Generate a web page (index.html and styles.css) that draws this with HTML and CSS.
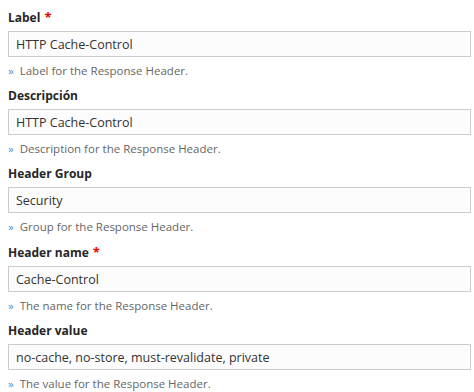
FILE: index.html
```html
<!DOCTYPE html>
<html lang="en">
<head>
    <meta charset="UTF-8">
    <meta name="viewport" content="width=device-width, initial-scale=1.0">
    <title>Response Header</title>
    <link rel="stylesheet" href="styles.css">
</head>
<body>
    <form class="header-form">
        <div class="form-item">
            <label for="label" class="required">Label</label>
            <input type="text" id="label" value="HTTP Cache-Control">
            <div class="description">Label for the Response Header.</div>
        </div>

        <div class="form-item">
            <label for="description">Descripción</label>
            <input type="text" id="description" value="HTTP Cache-Control">
            <div class="description">Description for the Response Header.</div>
        </div>

        <div class="form-item">
            <label for="group">Header Group</label>
            <input type="text" id="group" value="Security">
            <div class="description">Group for the Response Header.</div>
        </div>

        <div class="form-item">
            <label for="name" class="required">Header name</label>
            <input type="text" id="name" value="Cache-Control">
            <div class="description">The name for the Response Header.</div>
        </div>

        <div class="form-item">
            <label for="value">Header value</label>
            <input type="text" id="value" value="no-cache, no-store, must-revalidate, private">
            <div class="description">The value for the Response Header.</div>
        </div>
    </form>
</body>
</html>
```

FILE: styles.css
```css
body {
    font-family: 'Open Sans', 'Liberation Sans', sans-serif;
    background-color: #fff;
    color: #333;
    margin: 0;
    padding: 8px 3px 0 8px;
}
.form-item {
    margin-bottom: 8.5px;
}
label {
    display: block;
    font-weight: 700;
    font-size: 12px;
    line-height: 18px;
    color: #262626;
    margin-bottom: 4px;
}
.required:after {
    content: "*";
    color: #e00;
    font-size: 13px;
    margin-left: 4px;
}
input {
    display: block;
    width: 100%;
    box-sizing: border-box;
    height: 26px;
    padding: 2px 7px;
    border: 1px solid #ccc;
    border-radius: 0;
    background-color: #fcfcfc;
    font-family: inherit;
    font-size: 12.5px;
    color: #333;
}
.description {
    font-size: 11.5px;
    line-height: 16px;
    color: #666;
    margin-top: 5.5px;
}
.description:before {
    content: "\00bb";
    color: #4a90d9;
    margin-right: 6px;
}
```
